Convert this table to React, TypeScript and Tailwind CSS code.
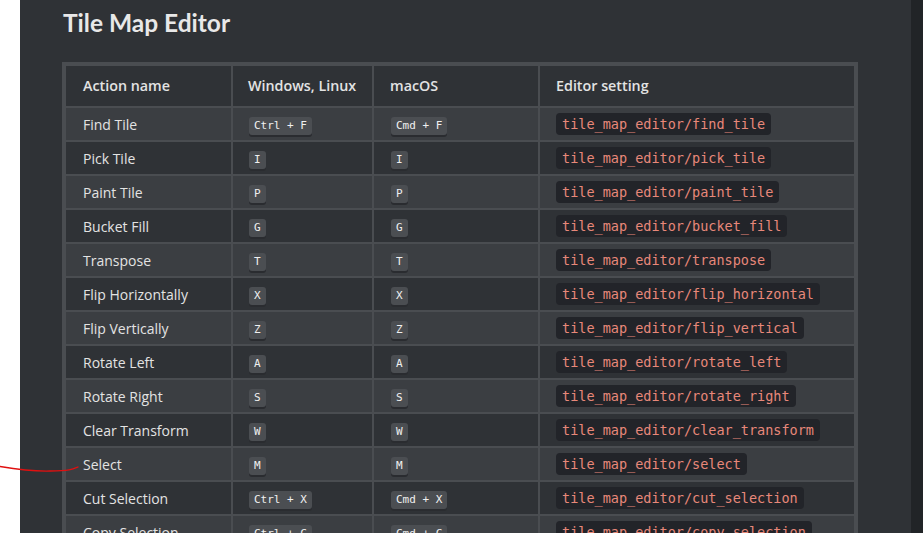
import React from "react";

const rows: [string, string, string, string][] = [
  ["Find Tile", "Ctrl + F", "Cmd + F", "find_tile"],
  ["Pick Tile", "I", "I", "pick_tile"],
  ["Paint Tile", "P", "P", "paint_tile"],
  ["Bucket Fill", "G", "G", "bucket_fill"],
  ["Transpose", "T", "T", "transpose"],
  ["Flip Horizontally", "X", "X", "flip_horizontal"],
  ["Flip Vertically", "Z", "Z", "flip_vertical"],
  ["Rotate Left", "A", "A", "rotate_left"],
  ["Rotate Right", "S", "S", "rotate_right"],
  ["Clear Transform", "W", "W", "clear_transform"],
  ["Select", "M", "M", "select"],
  ["Cut Selection", "Ctrl + X", "Cmd + X", "cut_selection"],
  ["Copy Selection", "Ctrl + C", "Cmd + C", "copy_selection"],
];

const sans = { fontFamily: '"Open Sans", "Noto Sans", sans-serif' };
const title = { fontFamily: 'Lato, "Open Sans", sans-serif' };
const mono = { fontFamily: '"DejaVu Sans Mono", monospace' };

function Kbd({ k }: { k: string }) {
  return (
    <span
      className="inline-block rounded-[3px] bg-[#4b4e52] px-[5px] leading-[18px] text-[11px] text-[#f0f0f0] shadow-[0_2px_0_#2a2c30]"
      style={mono}
    >
      {k}
    </span>
  );
}

export default function App() {
  return (
    <div className="relative flex h-[533px] w-[923px] overflow-hidden bg-white" style={sans}>
      <div className="w-[20px] shrink-0 bg-white" />
      <div className="w-[891px] shrink-0 bg-[#2f3236] pl-[42px] pt-[5px]">
        <h1 className="pl-[1px] text-[24.5px] font-bold leading-[35px] text-[#e8e8e8]" style={title}>
          Tile Map Editor
        </h1>
        <table className="mt-[22px] border-separate border-spacing-[2px] bg-[#4a4d51] p-[2px] text-[#e3e3e3]">
          <thead>
            <tr className="h-[40px] bg-[#2f3236] text-left text-[14.3px] font-semibold">
              <th className="w-[165px] pl-[17px] font-semibold">Action name</th>
              <th className="w-[139px] pl-[15px] font-semibold">Windows, Linux</th>
              <th className="w-[164px] pl-[16px] font-semibold">macOS</th>
              <th className="w-[314px] pl-[16px] font-semibold">Editor setting</th>
            </tr>
          </thead>
          <tbody>
            {rows.map((r, i) => (
              <tr key={i} className={`h-[32px] text-[14px] ${i % 2 === 0 ? "bg-[#3b3e42]" : "bg-[#2f3236]"}`}>
                <td className="pl-[17px]">{r[0]}</td>
                <td className="pl-[16px]">
                  <Kbd k={r[1]} />
                </td>
                <td className="pl-[17px]">
                  <Kbd k={r[2]} />
                </td>
                <td className="pl-[16px]">
                  <code
                    className="inline-block rounded-[4px] bg-[#222429] px-[6px] leading-[22px] text-[13.5px] text-[#e8887a]"
                    style={mono}
                  >
                    tile_map_editor/{r[3]}
                  </code>
                </td>
              </tr>
            ))}
          </tbody>
        </table>
      </div>
      <div className="w-[12px] shrink-0 bg-[#212427]" />
      <svg className="pointer-events-none absolute left-0 top-0" width="100" height="533">
        <path
          d="M0 466.5 C 15 469, 30 471.5, 50 471 S 72 469.5, 78 467"
          stroke="#e01010"
          strokeWidth="1.3"
          fill="none"
          strokeLinecap="round"
        />
      </svg>
    </div>
  );
}
